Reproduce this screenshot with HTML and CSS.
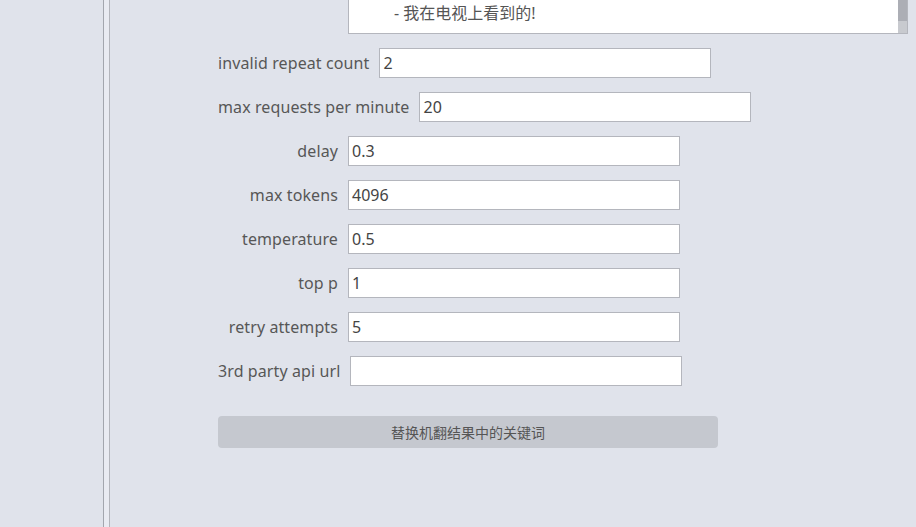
FILE: index.html
```html
<!DOCTYPE html>
<html lang="zh-CN">
<head>
<meta charset="utf-8">
<title>Settings</title>
<link rel="stylesheet" href="styles.css">
</head>
<body>
<div class="window">
  <aside class="sidebar"></aside>
  <div class="splitter"></div>
  <main class="content">
    <div class="prompt-box">
      <div class="prompt-text">- 我在电视上看到的!</div>
      <div class="scrollbar"><div class="thumb"></div></div>
    </div>
    <div class="form">
      <div class="row"><label class="label">invalid repeat count</label><div class="field">2</div></div>
      <div class="row"><label class="label">max requests per minute</label><div class="field">20</div></div>
      <div class="row"><label class="label">delay</label><div class="field">0.3</div></div>
      <div class="row"><label class="label">max tokens</label><div class="field">4096</div></div>
      <div class="row"><label class="label">temperature</label><div class="field">0.5</div></div>
      <div class="row"><label class="label">top p</label><div class="field">1</div></div>
      <div class="row"><label class="label">retry attempts</label><div class="field">5</div></div>
      <div class="row"><label class="label">3rd party api url</label><div class="field"></div></div>
    </div>
    <button class="action">替换机翻结果中的关键词</button>
  </main>
</div>
</body>
</html>
```
FILE: styles.css
```css
html, body {
  margin: 0;
  padding: 0;
  height: 100%;
  background: #e0e3eb;
  overflow: hidden;
}
body {
  font-family: "Noto Sans", "Noto Sans CJK SC", sans-serif;
  color: #575757;
}
.window {
  display: flex;
  height: 527px;
}
.sidebar {
  width: 103px;
  flex: none;
}
.splitter {
  width: 5px;
  flex: none;
  background: #e9ebf2;
  border-left: 1px solid #a3a6ae;
  border-right: 1px solid #b3b5bc;
}
.content {
  flex: 1;
  padding-left: 108px;
  display: flex;
  flex-direction: column;
  align-items: flex-start;
}
.prompt-box {
  margin-top: -22px;
  margin-left: 130px;
  width: 558px;
  height: 54px;
  background: #fff;
  border: 1px solid #b4b6bd;
  position: relative;
  box-sizing: content-box;
}
.prompt-text {
  padding: 24px 0 0 45px;
  font-size: 16px;
  line-height: 20px;
  color: #555;
}
.scrollbar {
  position: absolute;
  right: 0;
  top: 0;
  bottom: 0;
  width: 9px;
  background: #c8cacf;
}
.thumb {
  height: 42px;
  background: #acaeb5;
}
.form {
  margin-top: 14px;
  display: flex;
  flex-direction: column;
  gap: 14px;
}
.row {
  display: flex;
  align-items: center;
  gap: 10px;
  height: 30px;
}
.label {
  min-width: 120px;
  text-align: right;
  font-size: 16px;
  letter-spacing: 0.1px;
  white-space: nowrap;
}
.field {
  width: 327px;
  height: 28px;
  background: #fff;
  border: 1px solid #b4b6bd;
  font-size: 16px;
  line-height: 28px;
  padding: 0 0 0 3px;
  box-sizing: content-box;
  color: #444;
}
.action {
  margin-top: 30px;
  width: 500px;
  height: 32px;
  border: none;
  border-radius: 4px;
  background: #c5c8cf;
  color: #555;
  font-family: "Noto Sans CJK SC", sans-serif;
  font-size: 14px;
  padding: 0;
}
```
